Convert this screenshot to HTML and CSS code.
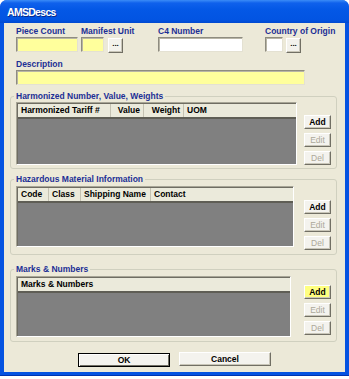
FILE: index.html
```html
<!DOCTYPE html>
<html>
<head>
<meta charset="utf-8">
<link rel="stylesheet" href="styles.css">
</head>
<body>
<div class="win">
  <div class="titlebar"><span class="title">AMSDescs</span></div>
  <div class="client">
    <div class="row1">
      <div class="fld">
        <div class="lbl">Piece Count</div>
        <div class="in yel w-piece"></div>
      </div>
      <div class="fld">
        <div class="lbl">Manifest Unit</div>
        <div class="inrow"><div class="in yel w-unit"></div><div class="dots">...</div></div>
      </div>
      <div class="fld">
        <div class="lbl">C4 Number</div>
        <div class="in wht w-c4"></div>
      </div>
      <div class="fld">
        <div class="lbl">Country of Origin</div>
        <div class="inrow"><div class="in wht w-cty"></div><div class="dots dots-cty">...</div></div>
      </div>
    </div>
    <div class="desc">
      <div class="lbl">Description</div>
      <div class="in yel w-desc"></div>
    </div>

    <fieldset class="grp g1">
      <legend>Harmonized Number, Value, Weights</legend>
      <div class="grow">
        <div class="list l1">
          <div class="hdr">
            <div class="col c-tariff">Harmonized Tariff #</div>
            <div class="col c-value r">Value</div>
            <div class="col c-weight r">Weight</div>
            <div class="col c-uom last">UOM</div>
          </div>
          <div class="lbody"></div>
        </div>
        <div class="btns b1">
          <div class="btn add">Add</div>
          <div class="btn dis">Edit</div>
          <div class="btn dis">Del</div>
        </div>
      </div>
    </fieldset>

    <fieldset class="grp g2">
      <legend>Hazardous Material Information</legend>
      <div class="grow">
        <div class="list l2">
          <div class="hdr">
            <div class="col c-code">Code</div>
            <div class="col c-class">Class</div>
            <div class="col c-ship">Shipping Name</div>
            <div class="col c-contact last">Contact</div>
          </div>
          <div class="lbody"></div>
        </div>
        <div class="btns b2">
          <div class="btn add">Add</div>
          <div class="btn dis">Edit</div>
          <div class="btn dis">Del</div>
        </div>
      </div>
    </fieldset>

    <fieldset class="grp g3">
      <legend>Marks &amp; Numbers</legend>
      <div class="grow">
        <div class="list l3">
          <div class="hdr">
            <div class="col c-marks last">Marks &amp; Numbers</div>
          </div>
          <div class="lbody"></div>
        </div>
        <div class="btns b3">
          <div class="btn add focus">Add</div>
          <div class="btn dis">Edit</div>
          <div class="btn dis">Del</div>
        </div>
      </div>
    </fieldset>

    <div class="footer">
      <div class="pbtn default">OK</div>
      <div class="pbtn">Cancel</div>
    </div>
  </div>
</div>
</body>
</html>
```

FILE: styles.css
```css
* { box-sizing: border-box; }
body {
  margin: 0;
  background: #ffffff;
  font-family: "Liberation Sans", Arial, sans-serif;
}
.win {
  width: 349px;
  height: 376px;
  background: #0553e1;
  border-radius: 7px 7px 0 0;
  display: flex;
  flex-direction: column;
  border-bottom: 1px solid #0035b0;
}
.titlebar {
  height: 23px;
  flex: none;
  border-radius: 7px 7px 0 0;
  background: linear-gradient(#3b8cf7 0, #0f61ec 3px, #0458e6 40%, #0254e2 85%, #0049d0 100%);
  display: flex;
  align-items: center;
  padding-left: 7px;
}
.title {
  color: #ffffff;
  font-weight: bold;
  font-size: 10.5px;
  letter-spacing: -0.7px;
  text-shadow: 1px 1px 0 #0a2a8a;
}
.client {
  flex: 1;
  margin: 0 4px 3px 4px;
  background: #ece9d8;
  display: flex;
  flex-direction: column;
}
.lbl {
  font-size: 8.5px;
  font-weight: bold;
  color: #1c2f95;
  line-height: 11px;
  height: 11px;
  white-space: nowrap;
}
.row1 {
  margin: 3px 0 0 12px;
  height: 27px;
  display: grid;
  grid-template-columns: 65px 77px 107px auto;
}
.inrow { display: flex; align-items: flex-start; }
.in {
  height: 15px;
  border: 1px solid;
  border-color: #8e8c80 #e4e1d2 #e4e1d2 #8e8c80;
  box-shadow: inset 1px 1px 0 #b8b5a6;
}
.yel { background: #ffff9c; }
.wht { background: #ffffff; }
.w-piece { width: 62px; }
.w-unit { width: 23px; }
.w-c4 { width: 85px; }
.w-cty { width: 18px; }
.w-desc { width: 289px; }
.dots {
  width: 15px;
  height: 15px;
  margin: 1px 0 0 4px;
  background: #f3f2ec;
  border: 1px solid;
  border-color: #ffffff #716f64 #716f64 #ffffff;
  box-shadow: inset -1px -1px 0 #c9c6b8;
  font-size: 8px;
  font-weight: bold;
  line-height: 10px;
  text-align: center;
  color: #000;
}
.dots-cty { margin-left: 3px; }
.desc {
  margin: 6px 0 0 12px;
}

.grp {
  margin: 0 0 0 6px;
  width: 327px;
  padding: 0 0 3px 0;
  border: 1px solid #d0d0bf;
  border-radius: 3px;
  min-width: 0;
}
.grp legend {
  font-size: 8.5px;
  font-weight: bold;
  color: #1c2f95;
  line-height: 11px;
  height: 11px;
  padding: 0 2px;
  margin-left: 3px;
  white-space: nowrap;
}
.g1 { margin-top: 6px; }
.g2 { margin-top: 5px; padding-top: 1px; padding-bottom: 4px; }
.g3 { margin-top: 9px; padding-top: 1px; padding-bottom: 4px; }

.grow { display: flex; align-items: flex-start; }
.list {
  margin-left: 5px;
  height: 63px;
  display: flex;
  flex-direction: column;
  border: 1px solid;
  border-color: #a7a596 #ffffff #ffffff #a7a596;
  box-shadow: inset 1px 1px 0 #6f6d62;
}
.l1 { width: 281px; }
.l2 { width: 278px; height: 61px; }
.l3 { width: 275px; height: 61px; }
.hdr {
  height: 15px;
  flex: none;
  display: flex;
  background: #ebeadb;
  border-bottom: 2px solid #5f5e55;
  margin: 1px 0 0 1px;
}
.col {
  font-size: 8.5px;
  font-weight: bold;
  color: #000;
  line-height: 13px;
  padding: 0 3px;
  border-right: 1px solid #c5c2b2;
  white-space: nowrap;
  overflow: hidden;
}
.col.r { text-align: right; }
.col.last { border-right: none; flex: 1; }
.c-tariff { width: 93px; }
.c-value { width: 33px; }
.c-weight { width: 40px; }
.c-code { width: 31px; }
.c-class { width: 32px; }
.c-ship { width: 70px; }
.lbody { flex: 1; background: #808080; margin-left: 1px; }

.btns {
  margin-left: auto;
  margin-right: 5px;
  display: flex;
  flex-direction: column;
  gap: 4px;
}
.b1 { margin-top: 13px; }
.b2 { margin-top: 14px; }
.b3 { margin-top: 9px; }
.btn {
  width: 27px;
  height: 14px;
  background: #f4f3ee;
  border: 1px solid;
  border-color: #ffffff #716f64 #716f64 #ffffff;
  box-shadow: inset -1px -1px 0 #c9c6b8;
  font-size: 8.5px;
  font-weight: bold;
  line-height: 12px;
  text-align: center;
  color: #000;
}
.btn.dis { color: #aca899; font-weight: normal; }
.btn.focus { background: #ffff80; }

.footer {
  margin: 10px 0 0 74px;
  display: flex;
  gap: 9px;
  align-items: flex-start;
}
.pbtn {
  width: 92px;
  height: 14px;
  background: #f4f3ee;
  border: 1px solid;
  border-color: #ffffff #716f64 #716f64 #ffffff;
  box-shadow: inset -1px -1px 0 #c9c6b8;
  font-size: 8.5px;
  font-weight: bold;
  line-height: 12px;
  text-align: center;
  color: #000;
}
.pbtn.default {
  margin-top: 1px;
  border: 1px solid #000;
  box-shadow: inset 1px 1px 0 #ffffff, inset -1px -1px 0 #716f64;
}
```
